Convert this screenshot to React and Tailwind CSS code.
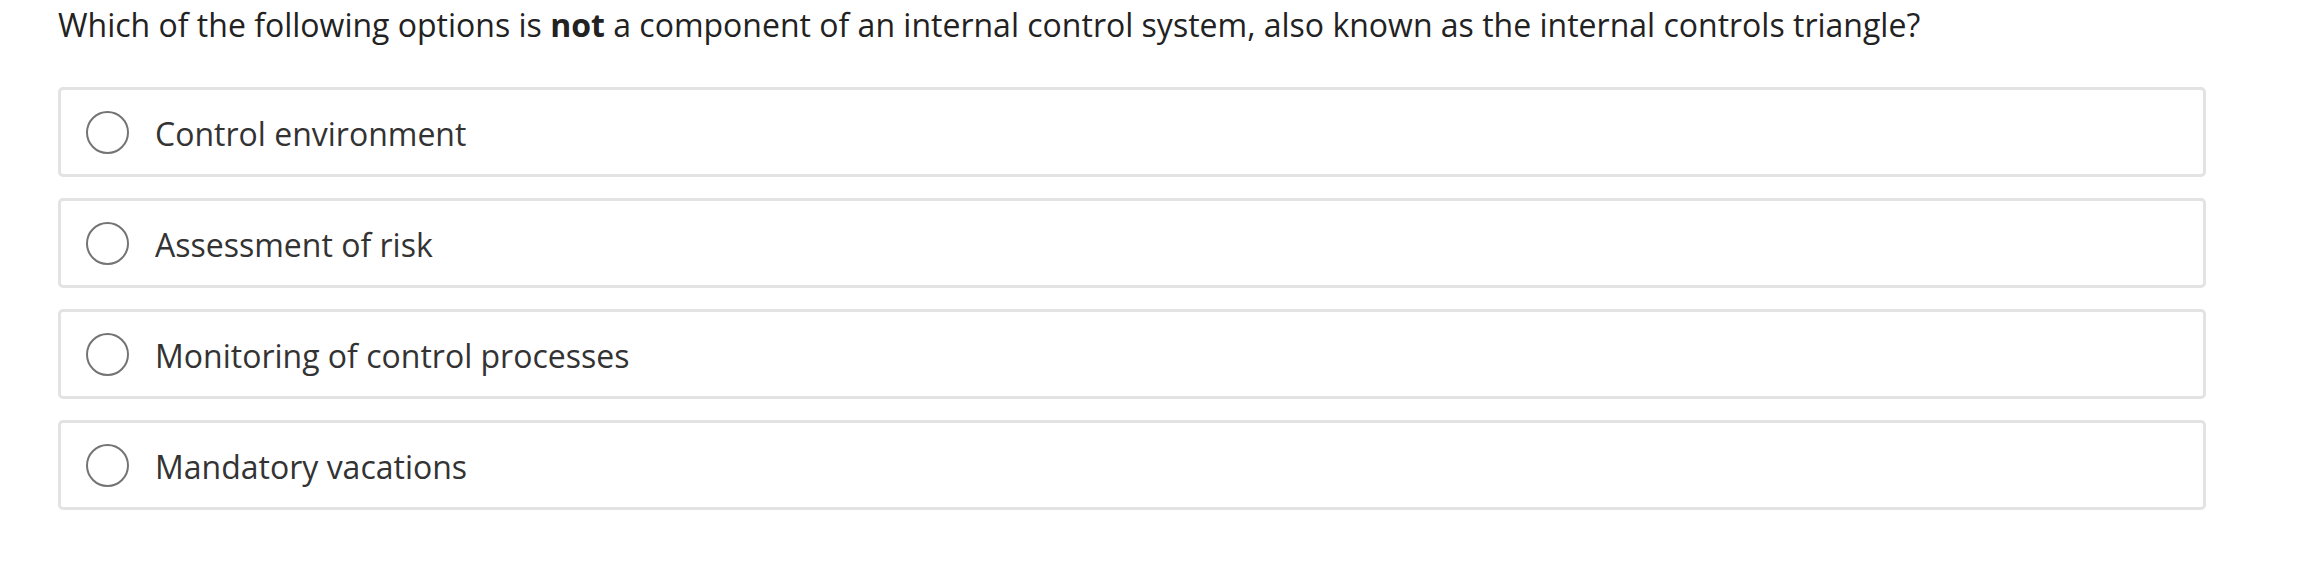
import React from 'react';

const options = [
  'Control environment',
  'Assessment of risk',
  'Monitoring of control processes',
  'Mandatory vacations',
];

function App() {
  return (
    <div
      className="bg-white min-h-screen pl-[58px] pr-[96px] pt-[3px]"
      style={{ fontFamily: '"Open Sans", sans-serif' }}
    >
      <p className="text-[32px] leading-[44px] text-[#222]">
        Which of the following options is <strong className="font-bold">not</strong> a component of an internal control system, also known as the internal controls triangle?
      </p>
      <div className="mt-[40px] flex flex-col gap-[21px]">
        {options.map((opt) => (
          <label
            key={opt}
            className="h-[90px] flex items-center pl-[25px] border-[3px] border-[#e3e3e3] rounded-[5px] bg-white"
          >
            <span className="w-[43px] h-[43px] rounded-full border-2 border-[#747474] shrink-0"></span>
            <span className="ml-[26px] pt-[3px] text-[32px] text-[#333]">{opt}</span>
          </label>
        ))}
      </div>
    </div>
  );
}

export default App;
